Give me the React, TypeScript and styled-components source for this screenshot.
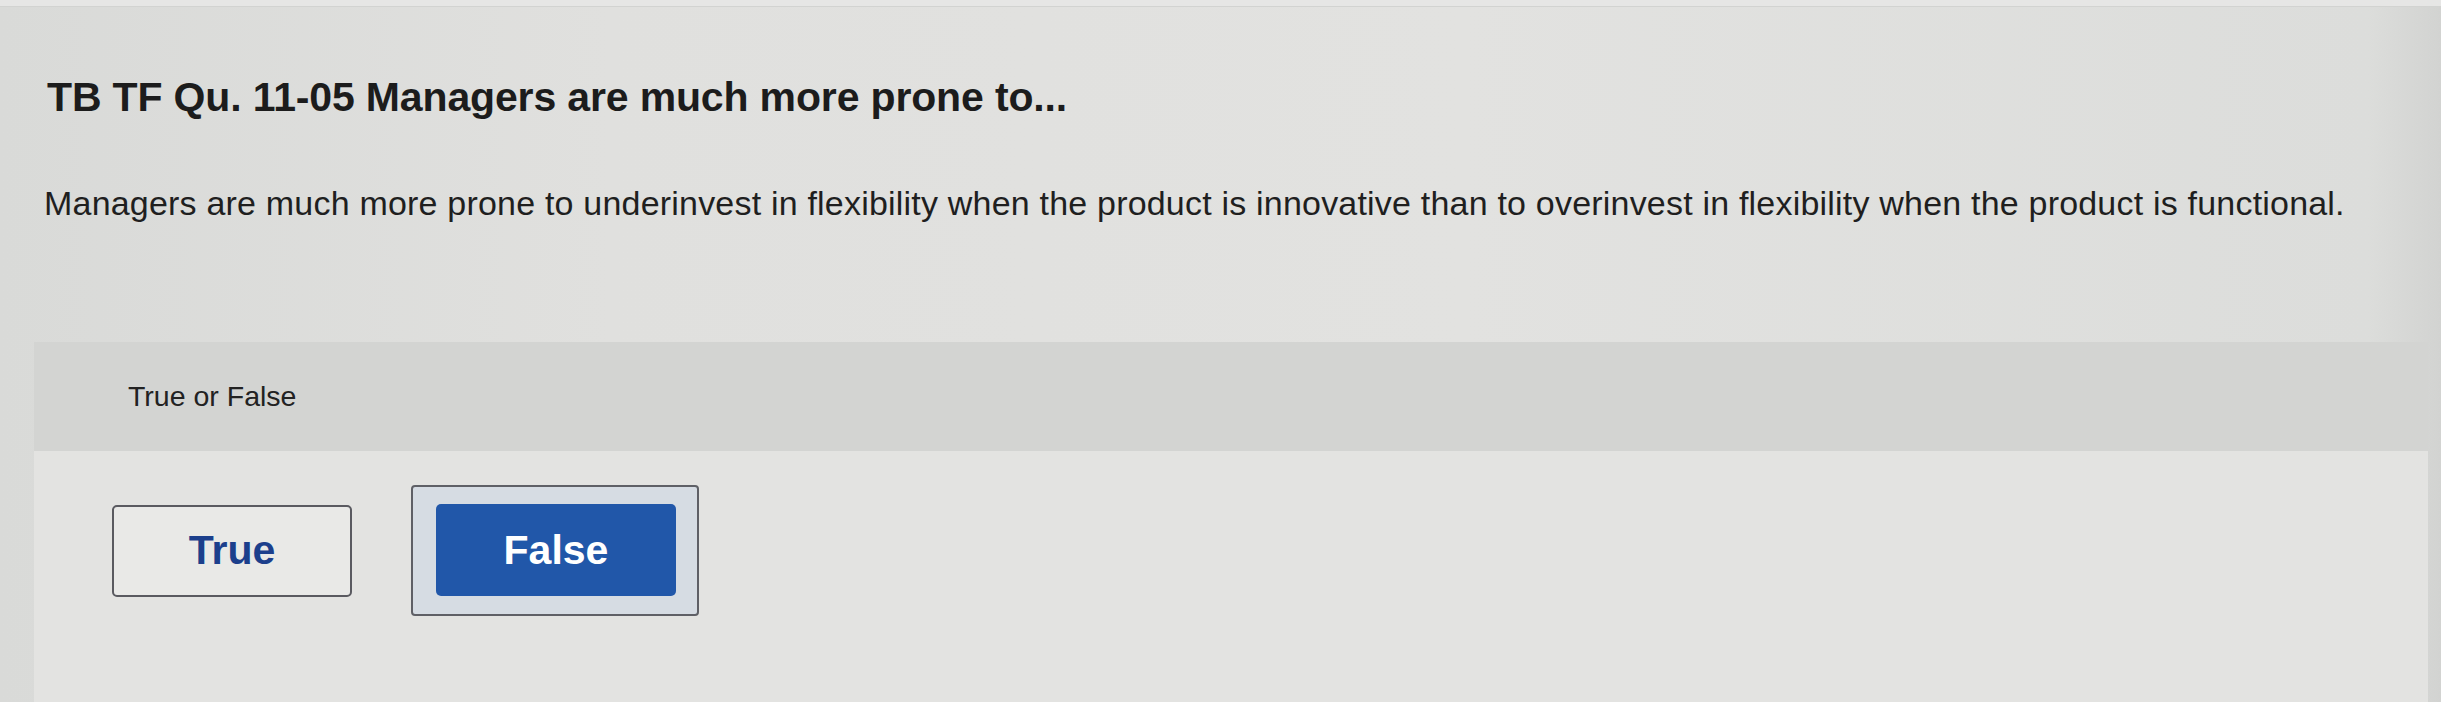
import React, { useState } from 'react';
import styled, { createGlobalStyle } from 'styled-components';

const GlobalStyle = createGlobalStyle`
  html, body {
    margin: 0;
    padding: 0;
    background: #d2d3d1;
  }
  body {
    font-family: "Liberation Sans", Arial, sans-serif;
  }
`;

const Page = styled.div`
  width: 2441px;
  height: 702px;
  overflow: hidden;
  display: flex;
  flex-direction: column;
  background: linear-gradient(90deg, #d9dad8 0%, #e0e0de 25%, #e2e2e0 60%, #dcdddb 97%, #d2d3d1 100%);
`;

const TopEdge = styled.div`
  height: 6px;
  background: #e6e6e5;
  border-bottom: 1px solid #d2d3d1;
`;

const Title = styled.h1`
  margin: 66px 0 0 47px;
  font-size: 41px;
  line-height: 48px;
  font-weight: 700;
  color: #1c1c1c;
  letter-spacing: -0.15px;
`;

const Prompt = styled.p`
  margin: 62px 0 0 44px;
  font-size: 34px;
  line-height: 40px;
  font-weight: 400;
  color: #1f1f1f;
  letter-spacing: 0.2px;
  white-space: nowrap;
`;

const Card = styled.section`
  margin: 119px 13px 0 34px;
  flex: 1;
  display: flex;
  flex-direction: column;
  background: #e3e3e1;
`;

const CardHeader = styled.div`
  height: 109px;
  display: flex;
  align-items: center;
  padding-left: 94px;
  background: #d3d4d2;
  font-size: 28.5px;
  color: #222;
`;

const Choices = styled.div`
  display: flex;
  align-items: center;
  gap: 59px;
  padding: 34px 0 0 78px;
`;

const Choice = styled.button<{ selected?: boolean }>`
  width: 240px;
  height: 92px;
  border-radius: 5px;
  font-family: inherit;
  font-size: 41px;
  font-weight: 700;
  cursor: pointer;
  border: ${p => (p.selected ? 'none' : '2px solid #5a5a60')};
  background: ${p => (p.selected ? '#2157a9' : '#e9e9e7')};
  color: ${p => (p.selected ? '#ffffff' : '#1c3f8c')};
`;

const FocusRing = styled.div<{ active?: boolean }>`
  display: flex;
  align-items: center;
  justify-content: center;
  padding: ${p => (p.active ? '17px 21px 18px 23px' : '0')};
  border: ${p => (p.active ? '2px solid #5f6066' : 'none')};
  border-radius: 4px;
  background: ${p => (p.active ? '#d6dce3' : 'transparent')};
`;

const App: React.FC = () => {
  const [answer, setAnswer] = useState<'True' | 'False'>('False');

  return (
    <>
      <GlobalStyle />
      <Page>
        <TopEdge />
        <Title>TB TF Qu. 11-05 Managers are much more prone to...</Title>
        <Prompt>
          Managers are much more prone to underinvest in flexibility when the product is innovative than to
          overinvest in flexibility when the product is functional.
        </Prompt>
        <Card>
          <CardHeader>True or False</CardHeader>
          <Choices>
            {(['True', 'False'] as const).map(option => (
              <FocusRing key={option} active={answer === option}>
                <Choice selected={answer === option} onClick={() => setAnswer(option)}>
                  {option}
                </Choice>
              </FocusRing>
            ))}
          </Choices>
        </Card>
      </Page>
    </>
  );
};

export default App;
